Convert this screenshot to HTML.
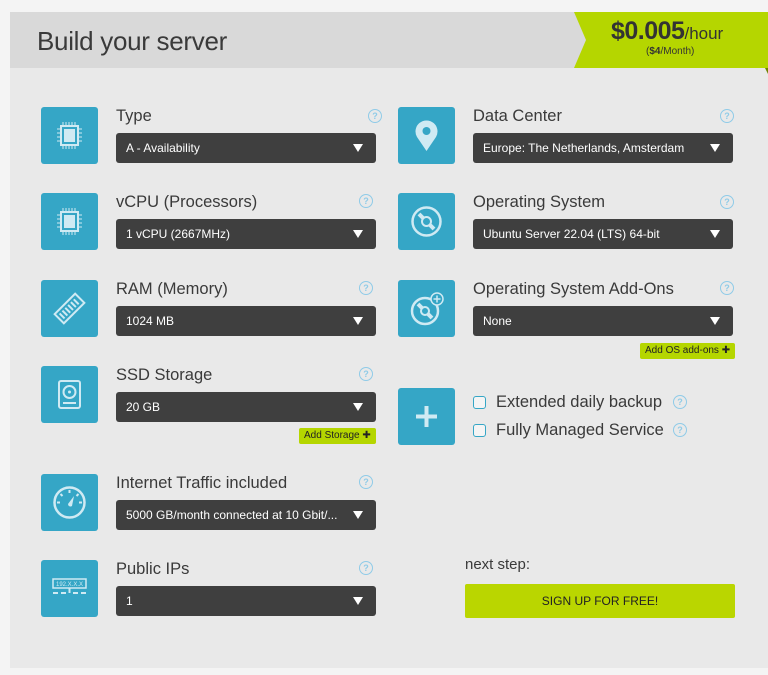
<!DOCTYPE html><html><head><style>
body{margin:0;width:768px;height:675px;background:#f4f4f4;font-family:"Liberation Sans",sans-serif;position:relative;overflow:hidden}
.panel{position:absolute;left:10px;top:12px;width:758px;height:656px;background:#e9e9e9}
.hdr{position:absolute;left:10px;top:12px;width:758px;height:56px;background:#d9d9d9}
.a{position:absolute}
.ic{position:absolute;width:57px;height:57px;background:#35a6c6;border-radius:3px}
.ic svg{position:absolute;left:0;top:0}
.lb{position:absolute;font-size:16.5px;color:#3a3a3a}
.sel{position:absolute;width:260px;height:30px;background:#3f3f3f;border-radius:3px;color:#fff;font-size:12px;line-height:30px;box-sizing:border-box;padding-left:10px}
.sel:after{content:"";position:absolute;right:13px;top:11px;border-left:5px solid transparent;border-right:5px solid transparent;border-top:8px solid #fff}
.hp{position:absolute;width:12px;height:12px;border:1.5px solid #8fcbe8;border-radius:50%;color:#8fcbe8;font-size:9px;line-height:12px;text-align:center;font-weight:bold}
.add{position:absolute;height:16px;background:#b5d600;font-size:10px;line-height:16px;padding:0 5px;color:#222;border-radius:2px}
.cb{position:absolute;width:11px;height:11px;border:1.5px solid #35a6c6;border-radius:3px;background:#f4f4f4}
</style></head><body>
<div class="panel"></div><div class="hdr"></div>
<div class="a" style="left:37px;top:26px;font-size:26px;color:#3a3a3a;letter-spacing:-0.3px">Build your server</div>
<svg class="a" style="left:574px;top:12px" width="194" height="64"><polygon points="0,0 194,0 194,56 0,56 12,28" fill="#b5d600"/><polygon points="191,56 194,56 194,62" fill="#6f8400"/></svg>
<div class="a" style="left:611px;top:17px;font-size:25px;font-weight:bold;color:#333;letter-spacing:-0.5px">$0.005<span style="font-size:17px;font-weight:normal;letter-spacing:0">/hour</span></div>
<div class="a" style="left:646px;top:46px;font-size:10px;color:#333">(<b>$4</b>/Month)</div>

<div class="ic" style="left:41px;top:107px"><svg width="57" height="57"><rect x="20" y="19" width="17" height="19" fill="none" stroke="#cfeaf3" stroke-width="2"/><rect x="23" y="22" width="11" height="13" fill="#cfeaf3"/><path d="M22 15v4M25 15v4M28 15v4M31 15v4M34 15v4M22 38v4M25 38v4M28 38v4M31 38v4M34 38v4M16 22h4M16 26h4M16 30h4M16 34h4M37 22h4M37 26h4M37 30h4M37 34h4" stroke="#cfeaf3" stroke-width="1"/></svg></div>
<div class="lb" style="left:116px;top:107px">Type</div><div class="hp" style="left:368px;top:109px">?</div>
<div class="sel" style="left:116px;top:133px">A - Availability</div>

<div class="ic" style="left:41px;top:193px"><svg width="57" height="57"><rect x="20" y="19" width="17" height="19" fill="none" stroke="#cfeaf3" stroke-width="2"/><rect x="23" y="22" width="11" height="13" fill="#cfeaf3"/><path d="M22 15v4M25 15v4M28 15v4M31 15v4M34 15v4M22 38v4M25 38v4M28 38v4M31 38v4M34 38v4M16 22h4M16 26h4M16 30h4M16 34h4M37 22h4M37 26h4M37 30h4M37 34h4" stroke="#cfeaf3" stroke-width="1"/></svg></div>
<div class="lb" style="left:116px;top:193px">vCPU (Processors)</div><div class="hp" style="left:359px;top:194px">?</div>
<div class="sel" style="left:116px;top:219px">1 vCPU (2667MHz)</div>

<div class="ic" style="left:41px;top:280px"><svg width="57" height="57"><g transform="rotate(-45 28.5 28.5)"><rect x="14" y="22" width="29" height="13" fill="none" stroke="#cfeaf3" stroke-width="2"/><path d="M18 25v7M22 25v7M26 25v7M30 25v7M34 25v7M38 25v7" stroke="#cfeaf3" stroke-width="2"/></g></svg></div>
<div class="lb" style="left:116px;top:280px">RAM (Memory)</div><div class="hp" style="left:359px;top:281px">?</div>
<div class="sel" style="left:116px;top:306px">1024 MB</div>

<div class="ic" style="left:41px;top:366px"><svg width="57" height="57"><rect x="18" y="15" width="21" height="27" rx="2" fill="none" stroke="#cfeaf3" stroke-width="2"/><circle cx="28.5" cy="26" r="6" fill="none" stroke="#cfeaf3" stroke-width="2"/><circle cx="28.5" cy="26" r="1.5" fill="#cfeaf3"/><path d="M22 37h13" stroke="#cfeaf3" stroke-width="2"/></svg></div>
<div class="lb" style="left:116px;top:366px">SSD Storage</div><div class="hp" style="left:359px;top:367px">?</div>
<div class="sel" style="left:116px;top:392px">20 GB</div>
<div class="add" style="left:299px;top:428px">Add Storage ✚</div>

<div class="ic" style="left:41px;top:474px"><svg width="57" height="57"><circle cx="28.5" cy="28.5" r="15" fill="none" stroke="#cfeaf3" stroke-width="2.5"/><path d="M28.5 16v3M19.5 20l2 2M37.5 20l-2 2M16 28.5h3M41 28.5h-3" stroke="#cfeaf3" stroke-width="2"/><path d="M33 22l-6 8 a2.5 2.5 0 0 0 4 2z" fill="#cfeaf3"/></svg></div>
<div class="lb" style="left:116px;top:474px">Internet Traffic included</div><div class="hp" style="left:359px;top:475px">?</div>
<div class="sel" style="left:116px;top:500px">5000 GB/month connected at 10 Gbit/...</div>

<div class="ic" style="left:41px;top:560px"><svg width="57" height="57"><rect x="12" y="19" width="33" height="9" fill="none" stroke="#cfeaf3" stroke-width="1.5"/><text x="28.5" y="26" font-size="6" fill="#cfeaf3" text-anchor="middle" font-family="Liberation Sans">192.X.X.X</text><path d="M28.5 28v5M12 33h5M20 33h5M32 33h5M40 33h5" stroke="#cfeaf3" stroke-width="2"/></svg></div>
<div class="lb" style="left:116px;top:560px">Public IPs</div><div class="hp" style="left:359px;top:561px">?</div>
<div class="sel" style="left:116px;top:586px">1</div>

<div class="ic" style="left:398px;top:107px"><svg width="57" height="57"><path d="M28.5 44 L19 30 A11 11 0 1 1 38 30 Z" fill="#cfeaf3"/><circle cx="28.5" cy="24" r="4" fill="#35a6c6"/></svg></div>
<div class="lb" style="left:473px;top:107px">Data Center</div><div class="hp" style="left:720px;top:109px">?</div>
<div class="sel" style="left:473px;top:133px">Europe: The Netherlands, Amsterdam</div>

<div class="ic" style="left:398px;top:193px"><svg width="57" height="57"><circle cx="28.5" cy="28.5" r="14" fill="none" stroke="#cfeaf3" stroke-width="2.5"/><circle cx="28.5" cy="28.5" r="4.5" fill="none" stroke="#cfeaf3" stroke-width="2"/><path d="M21 21l4 4M32 32l4 4" stroke="#cfeaf3" stroke-width="4"/></svg></div>
<div class="lb" style="left:473px;top:193px">Operating System</div><div class="hp" style="left:720px;top:195px">?</div>
<div class="sel" style="left:473px;top:219px">Ubuntu Server 22.04 (LTS) 64-bit</div>

<div class="ic" style="left:398px;top:280px"><svg width="57" height="57"><circle cx="27" cy="31" r="13" fill="none" stroke="#cfeaf3" stroke-width="2.5"/><circle cx="27" cy="31" r="4" fill="none" stroke="#cfeaf3" stroke-width="2"/><path d="M20 24l4 4M30 34l4 4" stroke="#cfeaf3" stroke-width="4"/><circle cx="39" cy="19" r="6" fill="#35a6c6" stroke="#cfeaf3" stroke-width="1.5"/><path d="M39 15.5v7M35.5 19h7" stroke="#cfeaf3" stroke-width="1.5"/></svg></div>
<div class="lb" style="left:473px;top:280px">Operating System Add-Ons</div><div class="hp" style="left:720px;top:281px">?</div>
<div class="sel" style="left:473px;top:306px">None</div>
<div class="add" style="left:640px;top:343px">Add OS add-ons ✚</div>

<div class="ic" style="left:398px;top:388px"><svg width="57" height="57"><path d="M28.5 18v21M18 28.5h21" stroke="#cfeaf3" stroke-width="4"/></svg></div>
<div class="cb" style="left:473px;top:396px"></div><div class="lb" style="left:496px;top:393px">Extended daily backup</div><div class="hp" style="left:673px;top:395px">?</div>
<div class="cb" style="left:473px;top:424px"></div><div class="lb" style="left:496px;top:421px">Fully Managed Service</div><div class="hp" style="left:673px;top:423px">?</div>

<div class="a" style="left:465px;top:556px;font-size:15px;color:#3a3a3a">next step:</div>
<div class="a" style="left:465px;top:584px;width:270px;height:34px;background:#bad600;border-radius:2px;color:#222;font-size:12px;line-height:34px;text-align:center">SIGN UP FOR FREE!</div>
</body></html>
